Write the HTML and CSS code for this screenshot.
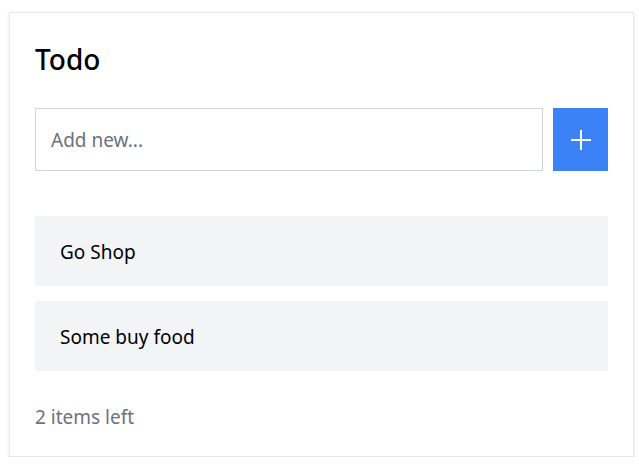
FILE: index.html
```html
<!DOCTYPE html>
<html>
<head>
<meta charset="utf-8">
<link rel="stylesheet" href="styles.css">
</head>
<body>
<div class="card">
  <h1 class="title">Todo</h1>
  <form class="add-row">
    <input class="add-input" type="text" placeholder="Add new...">
    <button class="add-btn" type="button" aria-label="Add">
      <svg width="22" height="22" viewBox="0 0 22 22"><path d="M11 1v20M1 11h20" stroke="#fff" stroke-width="2" fill="none"/></svg>
    </button>
  </form>
  <ul class="list">
    <li class="item">Go Shop</li>
    <li class="item">Some buy food</li>
  </ul>
  <div class="footer">2 items left</div>
</div>
</body>
</html>
```

FILE: styles.css
```css
html, body {
  margin: 0;
  padding: 0;
  background: #fff;
}
body {
  font-family: "Noto Sans", "Open Sans", sans-serif;
  color: #000;
}
.card {
  box-sizing: border-box;
  width: 625px;
  margin: 12px 0 0 9px;
  border: 1px solid #e5e7eb;
  padding: 25px;
  box-shadow: 0 1px 3px rgba(0,0,0,0.1);
  background: #fff;
}
.title {
  margin: 0;
  font-size: 28px;
  font-weight: 500;
  line-height: 40px;
  padding-top: 1px;
}
.add-row {
  display: flex;
  gap: 10px;
  margin: 29px 0 0;
}
.add-input {
  flex: 1;
  box-sizing: border-box;
  height: 63px;
  border: 1px solid #d1d5db;
  padding: 0 15px;
  font-family: inherit;
  font-size: 19px;
  color: #111;
  outline: none;
  margin: 0;
}
.add-input::placeholder {
  color: #6b7280;
}
.add-btn {
  width: 55px;
  height: 63px;
  border: 0;
  margin: 0;
  padding: 0;
  background: #3b82f6;
  display: flex;
  align-items: center;
  justify-content: center;
}
.list {
  list-style: none;
  margin: 45px 0 0;
  padding: 0;
  display: flex;
  flex-direction: column;
  gap: 15px;
}
.item {
  height: 70px;
  background: #f3f4f6;
  padding: 0 25px;
  display: flex;
  align-items: center;
  font-size: 19px;
  padding-top: 2px;
  box-sizing: border-box;
}
.footer {
  margin-top: 31px;
  font-size: 19px;
  line-height: 28px;
  color: #6b7280;
  padding-top: 1px;
}
```
